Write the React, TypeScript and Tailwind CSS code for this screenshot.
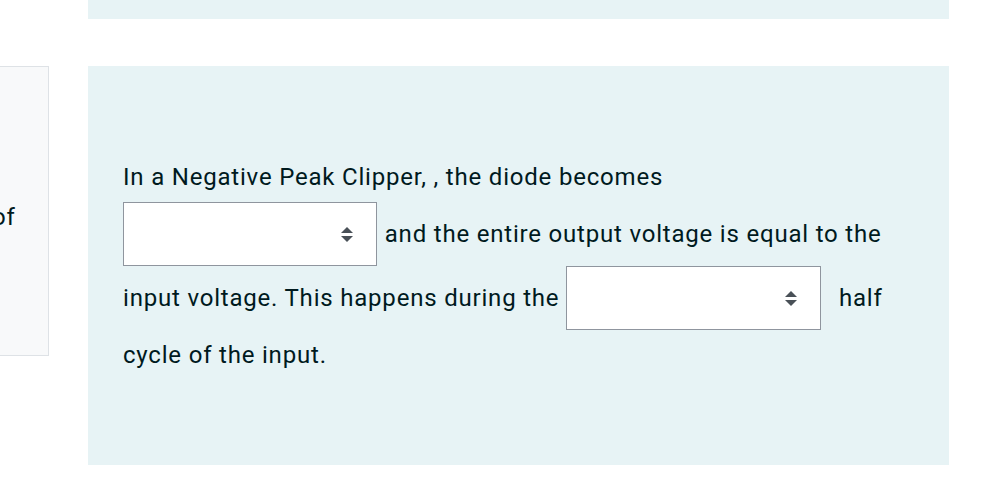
import React from "react";

function FakeSelect({ width }: { width: number }) {
  return (
    <span
      className="relative inline-block h-[64px] overflow-hidden border border-[#8f959e] bg-white align-[-24px]"
      style={{ width }}
    >
      <svg
        className="absolute right-[23px] top-[24px]"
        width="12"
        height="15"
        viewBox="0 0 12 15"
        aria-hidden="true"
      >
        <path d="M6 0 L12 6 L0 6 Z" fill="#495057" />
        <path d="M0 9 L12 9 L6 15 Z" fill="#495057" />
      </svg>
    </span>
  );
}

export default function App() {
  return (
    <div className="flex min-h-[501px] bg-white font-['Roboto',sans-serif] text-[#001a1e]">
      <div className="w-[88px] shrink-0 pt-[66px]">
        <div className="h-[290px] w-[49px] overflow-hidden border-y border-r border-[#dee2e6] bg-[#f8f9fa]">
          <div className="-ml-[8px] mt-[134px] text-[24px] leading-[32px] tracking-[0.8px]">of</div>
        </div>
      </div>
      <div className="w-[861px] shrink-0">
        <div className="h-[19px] bg-[#e7f3f5]" />
        <div className="mt-[47px] h-[399px] bg-[#e7f3f5] px-[35px] pt-[86px]">
          <p className="text-[24px] leading-[50px] tracking-[0.8px]">
            In a Negative Peak Clipper, , the diode becomes{" "}
            <FakeSelect width={254} />
            <span className="ml-[1px]"> and the entire output voltage is equal to the input voltage. This happens during the </span>
            <FakeSelect width={255} />
            <span className="ml-[11px]"> half cycle of the input.</span>
          </p>
        </div>
      </div>
    </div>
  );
}
